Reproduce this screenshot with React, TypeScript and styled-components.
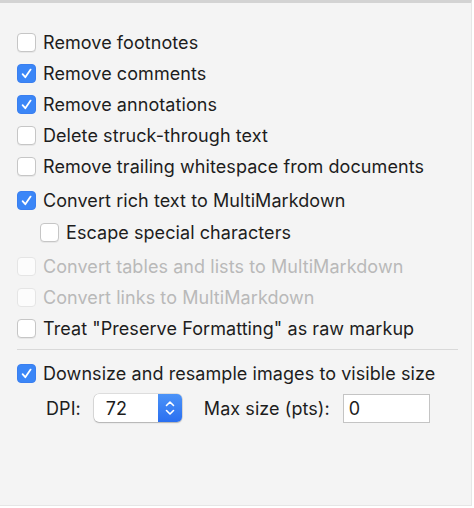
import React from "react";
import styled, { createGlobalStyle } from "styled-components";

const Global = createGlobalStyle`
  html, body { margin: 0; padding: 0; background: #ffffff; }
  body { font-family: "Inter", "Liberation Sans", Arial, sans-serif; -webkit-font-smoothing: antialiased; }
`;

const Panel = styled.div`
  box-sizing: border-box;
  width: 472px;
  height: 506px;
  background: #f4f4f4;
  border-top: 3px solid #d3d3d3;
  border-right: 1px solid #e6e6e6;
  border-bottom: 1px solid #e6e6e6;
  padding: 24px 13px 0 17px;
  display: flex;
  flex-direction: column;
`;

const Row = styled.label<{ $indent?: number; $mt?: number; $disabled?: boolean }>`
  display: flex;
  align-items: center;
  height: 31px;
  margin-top: ${(p) => p.$mt ?? 0}px;
  padding-left: ${(p) => p.$indent ?? 0}px;
  gap: 7px;
  font-size: 18px;
  letter-spacing: 0.07px;
  color: ${(p) => (p.$disabled ? "#b9b9b9" : "#1d1d1d")};
  white-space: nowrap;
`;

const Box = styled.span<{ $checked?: boolean; $disabled?: boolean }>`
  box-sizing: border-box;
  width: 19px;
  height: 19px;
  flex: none;
  border-radius: 4px;
  display: flex;
  align-items: center;
  justify-content: center;
  background: ${(p) => (p.$checked ? "#3b86f7" : "#ffffff")};
  border: 1px solid ${(p) => (p.$checked ? "#3a7ff0" : p.$disabled ? "#e2e2e2" : "#c6c6c6")};
  box-shadow: ${(p) => (p.$disabled || p.$checked ? "none" : "0 1px 0 rgba(0,0,0,0.05)")};
  opacity: ${(p) => (p.$disabled ? 0.8 : 1)};
`;

const Separator = styled.div`
  height: 1px;
  background: #d9d9d9;
  margin: 5px 0 8px 0;
`;

const FieldRow = styled.div`
  display: flex;
  align-items: center;
  height: 30px;
  margin-top: 4px;
  padding-left: 29px;
  font-size: 18px;
  letter-spacing: 0.07px;
  color: #1d1d1d;
`;

const FieldLabel = styled.span<{ $ml?: number; $mr?: number }>`
  margin-left: ${(p) => p.$ml ?? 0}px;
  margin-right: ${(p) => p.$mr ?? 12}px;
`;

const Popup = styled.div`
  box-sizing: border-box;
  width: 88px;
  height: 28px;
  display: flex;
  border-radius: 5px;
  background: #ffffff;
  box-shadow: 0 0 0 0.5px rgba(0, 0, 0, 0.18), 0 1px 1.5px rgba(0, 0, 0, 0.2);
  overflow: hidden;
`;

const PopupValue = styled.span`
  flex: 1;
  display: flex;
  align-items: center;
  padding-left: 12px;
  font-size: 18px;
`;

const Stepper = styled.span`
  width: 24px;
  display: flex;
  align-items: center;
  justify-content: center;
  background: linear-gradient(#4b93f8, #2a6ff0);
`;

const TextInput = styled.div`
  box-sizing: border-box;
  width: 87px;
  height: 29px;
  background: #ffffff;
  border: 1px solid #c4c4c4;
  display: flex;
  align-items: center;
  padding-left: 5px;
  font-size: 18px;
`;

const Check = () => (
  <svg width="13" height="13" viewBox="0 0 13 13" fill="none">
    <path d="M2.6 7.1 L5.3 10.2 L10.6 2.6" stroke="#ffffff" strokeWidth="1.8" strokeLinecap="round" strokeLinejoin="round" />
  </svg>
);

const Chevrons = () => (
  <svg width="12" height="18" viewBox="0 0 12 18" fill="none">
    <path d="M2.5 6.5 L6 3 L9.5 6.5" stroke="#fff" strokeWidth="1.6" strokeLinecap="round" strokeLinejoin="round" />
    <path d="M2.5 11.5 L6 15 L9.5 11.5" stroke="#fff" strokeWidth="1.6" strokeLinecap="round" strokeLinejoin="round" />
  </svg>
);

type Item = { text: string; checked?: boolean; disabled?: boolean; indent?: number; mt?: number };

const items: Item[] = [
  { text: "Remove footnotes" },
  { text: "Remove comments", checked: true },
  { text: "Remove annotations", checked: true },
  { text: "Delete struck-through text" },
  { text: "Remove trailing whitespace from documents" },
  { text: "Convert rich text to MultiMarkdown", checked: true, mt: 3 },
  { text: "Escape special characters", indent: 23, mt: 1 },
  { text: "Convert tables and lists to MultiMarkdown", disabled: true, mt: 3 },
  { text: "Convert links to MultiMarkdown", disabled: true },
  { text: 'Treat "Preserve Formatting" as raw markup' },
];

const CheckRow = ({ text, checked, disabled, indent, mt }: Item) => (
  <Row $indent={indent} $mt={mt} $disabled={disabled}>
    <Box $checked={checked} $disabled={disabled}>{checked && <Check />}</Box>
    <span>{text}</span>
  </Row>
);

export default function App() {
  return (
    <>
      <Global />
      <Panel>
        {items.map((it) => (
          <CheckRow key={it.text} {...it} />
        ))}
        <Separator />
        <CheckRow text="Downsize and resample images to visible size" checked />
        <FieldRow>
          <FieldLabel $mr={13}>DPI:</FieldLabel>
          <Popup>
            <PopupValue>72</PopupValue>
            <Stepper><Chevrons /></Stepper>
          </Popup>
          <FieldLabel $ml={22} $mr={13}>Max size (pts):</FieldLabel>
          <TextInput>0</TextInput>
        </FieldRow>
      </Panel>
    </>
  );
}
